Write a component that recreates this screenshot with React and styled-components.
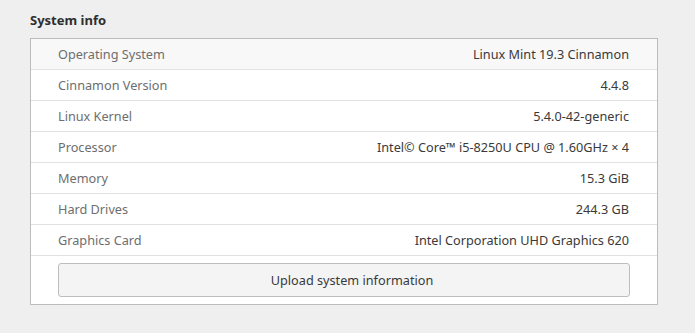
import React from "react";
import styled, { createGlobalStyle } from "styled-components";

const Global = createGlobalStyle`
  html, body { margin: 0; padding: 0; background: #efefef; }
  body { font-family: "Noto Sans", "Open Sans", sans-serif; font-size: 12.7px; }
`;

const Page = styled.div`
  padding: 10px 37px 0 30px;
  width: 628px;
`;

const Title = styled.h2`
  margin: 0;
  font-size: 13px;
  font-weight: 700;
  color: #2e2e2e;
  line-height: 20px;
  height: 28px;
`;

const Panel = styled.div`
  background: #ffffff;
  border: 1px solid #bcbcbc;
`;

const Row = styled.div`
  display: flex;
  justify-content: space-between;
  align-items: center;
  height: 30px;
  padding: 0 28px 0 27px;
  border-bottom: 1px solid #e2e2e2;
  background: ${(p) => (p.$first ? "#f8f8f8" : "#ffffff")};
`;

const Label = styled.span`
  color: #6e6e6e;
`;

const Value = styled.span`
  color: #3a3a3a;
`;

const Footer = styled.div`
  padding: 7px 27px 7px 27px;
`;

const Button = styled.button`
  display: block;
  width: 100%;
  height: 34px;
  background: #f4f4f4;
  border: 1px solid #bdbdbd;
  border-radius: 3px;
  font-family: inherit;
  font-size: 12.7px;
  color: #3a3a3a;
  padding: 0 0 0 16px;
`;

const rows = [
  ["Operating System", "Linux Mint 19.3 Cinnamon"],
  ["Cinnamon Version", "4.4.8"],
  ["Linux Kernel", "5.4.0-42-generic"],
  ["Processor", "Intel© Core™ i5-8250U CPU @ 1.60GHz × 4"],
  ["Memory", "15.3 GiB"],
  ["Hard Drives", "244.3 GB"],
  ["Graphics Card", "Intel Corporation UHD Graphics 620"],
];

export default function App() {
  return (
    <Page>
      <Global />
      <Title>System info</Title>
      <Panel>
        {rows.map(([k, v], i) => (
          <Row key={k} $first={i === 0}>
            <Label>{k}</Label>
            <Value>{v}</Value>
          </Row>
        ))}
        <Footer>
          <Button>Upload system information</Button>
        </Footer>
      </Panel>
    </Page>
  );
}
